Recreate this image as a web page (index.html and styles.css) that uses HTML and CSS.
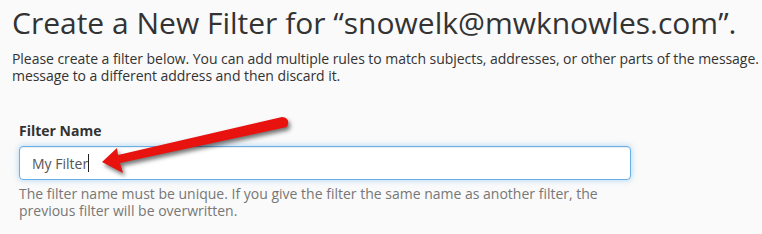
FILE: index.html
```html
<!DOCTYPE html>
<html>
<head>
<meta charset="utf-8">
<link rel="stylesheet" href="styles.css">
</head>
<body>
<div class="page">
  <h1 class="title">Create a New Filter for “snowelk@mwknowles.com”.</h1>
  <p class="intro">Please create a filter below. You can add multiple rules to match subjects, addresses, or other parts of the message.<br>message to a different address and then discard it.</p>
  <div class="form-group">
    <label class="label">Filter Name</label>
    <div class="input"><span class="value">My Filter</span><span class="caret"></span></div>
    <p class="help">The filter name must be unique. If you give the filter the same name as another filter, the<br>previous filter will be overwritten.</p>
  </div>
</div>
<svg class="arrow" width="762" height="234" viewBox="0 0 762 234">
  <path d="M102,162 L117,148 L118,155 L282,117 Q291,118 287,127 L120,163 L123,173 Z" fill="#e8120f"/>
</svg>
</body>
</html>
```

FILE: styles.css
```css
html, body {
  margin: 0;
  padding: 0;
  background: #fafafa;
  overflow: hidden;
}
body {
  width: 762px;
  height: 234px;
  position: relative;
  font-family: "Open Sans", "Liberation Sans", sans-serif;
  color: #333;
}
.page {
  padding: 6px 0 0 12px;
}
.title {
  margin: 0;
  font-size: 30px;
  font-weight: 400;
  line-height: 33px;
  color: #333;
  white-space: nowrap;
}
.intro {
  margin: 11px 0 0 0;
  font-size: 14px;
  line-height: 17px;
  letter-spacing: -0.05px;
  color: #333;
  white-space: nowrap;
}
.form-group {
  margin: 38px 0 0 7px;
  width: 612px;
}
.label {
  display: block;
  font-weight: 700;
  font-size: 14px;
  line-height: 17px;
  color: #333;
}
.input {
  margin-top: 7px;
  box-sizing: border-box;
  height: 34px;
  border: 1px solid #66afe9;
  border-radius: 4px;
  background: #fff;
  box-shadow: inset 0 1px 1px rgba(0,0,0,0.075), 0 0 6px rgba(102,175,233,0.5);
  padding: 0 12px;
  display: flex;
  align-items: center;
  font-size: 14px;
  color: #555;
}
.caret {
  display: inline-block;
  width: 1px;
  height: 18px;
  background: #222;
}
.help {
  margin: 5px 0 0 0;
  font-size: 14px;
  line-height: 17px;
  color: #777;
  white-space: nowrap;
}
.arrow {
  position: absolute;
  left: 0;
  top: 0;
  filter: drop-shadow(2px 3px 2px rgba(0,0,0,0.55));
}
```
